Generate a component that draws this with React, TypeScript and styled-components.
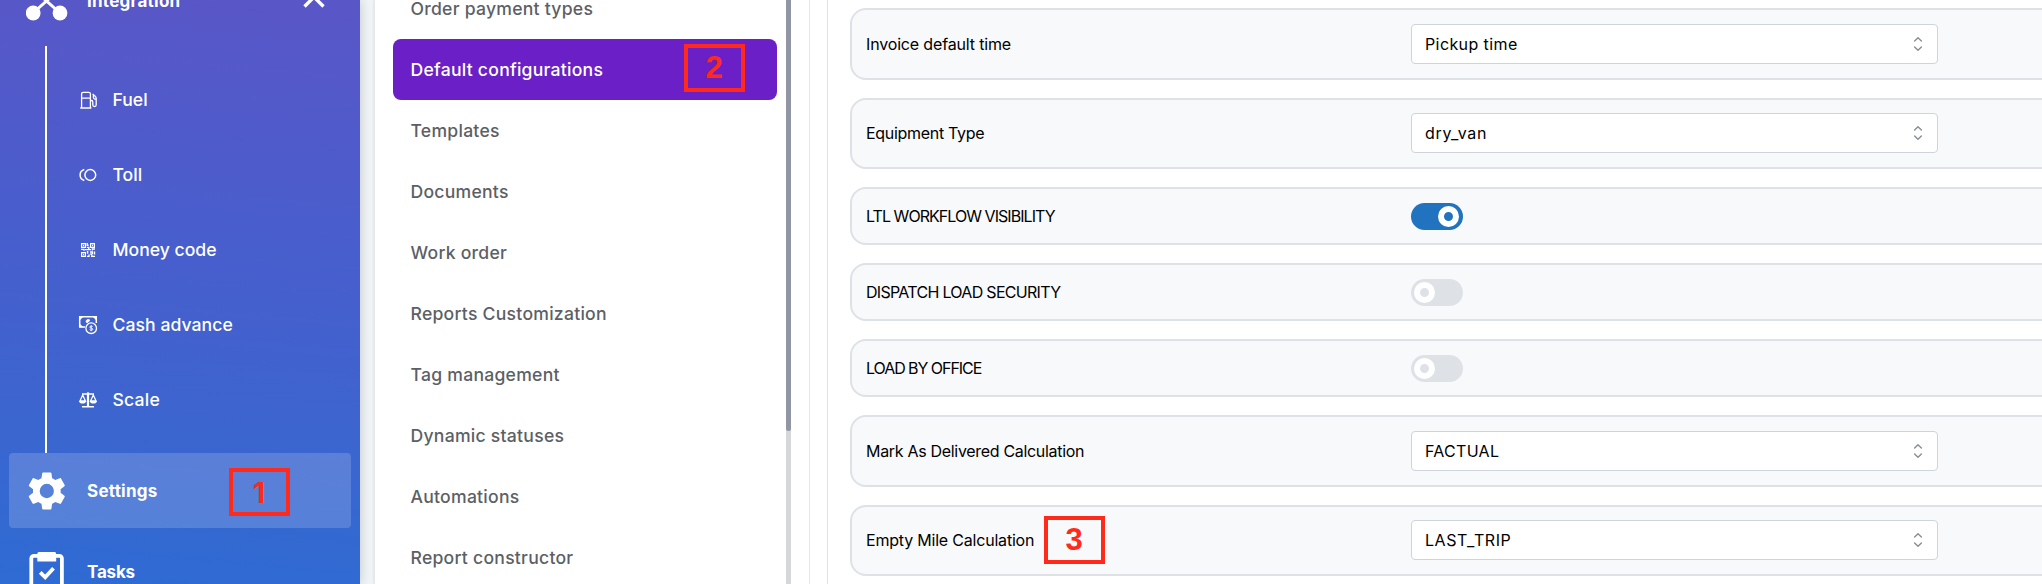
import React from 'react';
import styled, { createGlobalStyle } from 'styled-components';

const Global = createGlobalStyle`
  *{box-sizing:border-box}
  html,body{margin:0;height:584px;overflow:hidden;background:#fff}
  body{font-family:Inter,"Liberation Sans",sans-serif}
`;
const Page = styled.div`display:flex;height:584px;overflow:hidden;background:#f1f5f8;position:relative;`;
const Sidebar = styled.nav`
  width:360px;flex:none;height:584px;overflow:hidden;color:#fff;position:relative;z-index:1;
  background:linear-gradient(185deg,#5a56c7 0%,#485ecd 42%,#3c65cf 72%,#2e6bd3 100%);
  box-shadow:0 0 12px rgba(0,0,0,.2);
`;
const Parent = styled.div<{ $active?: boolean; $shift?: number }>`
  height:75px;margin:${p => p.$shift || 0}px 9px 0;padding-left:17px;display:flex;align-items:center;gap:19px;
  border-radius:4px;background:${p => (p.$active ? 'rgba(255,255,255,.17)' : 'transparent')};
  svg{flex:none}
`;
const ParentLabel = styled.span<{ $ls?: number }>`font-size:17px;font-weight:700;letter-spacing:${p => p.$ls || 0}px;flex:1;`;
const Children = styled.div`margin:8px 0 0 45px;height:407px;border-left:2px solid #fff;padding-top:16px;`;
const Child = styled.div`
  height:75px;display:flex;align-items:center;padding-left:31px;gap:14.5px;font-size:17.6px;font-weight:500;
  svg{flex:none}
`;
const ChildLabel = styled.span<{ $ls?: number }>`letter-spacing:${p => p.$ls || 0}px;`;

const Menu = styled.aside`
  width:436px;flex:none;margin-left:14px;background:#fff;border:solid #e5e7ea;border-width:0 1px;display:flex;
  box-shadow:0 0 3px rgba(0,0,0,.12);
`;
const MenuList = styled.div`width:384px;margin:-22px 9px 0 18px;`;
const MenuItem = styled.div<{ $active?: boolean }>`
  height:61px;display:flex;align-items:center;padding-left:17.5px;border-radius:8px;font-size:17.6px;font-weight:450;
  letter-spacing:.25px;
  color:${p => (p.$active ? '#fff' : '#5c5f66')};background:${p => (p.$active ? '#6a20c6' : 'transparent')};
`;
const ScrollTrack = styled.div`width:5px;background:#d5d7d9;`;
const ScrollThumb = styled.div`height:431px;background:#9295a4;border-radius:0 0 3px 3px;`;

const Content = styled.main`
  flex:1;min-width:0;background:#fff;padding-left:17px;display:flex;
`;
const Panel = styled.div`flex:1;border-left:1px solid #dee2e6;padding:8px 0 0 22px;display:flex;flex-direction:column;gap:18px;`;
const Card = styled.div<{ $tall?: boolean }>`
  height:${p => (p.$tall ? 71.5 : 58)}px;flex:none;margin-right:-20px;border:2px solid #dee2e6;border-radius:16px;background:#f8f9fb;
  display:flex;align-items:center;padding-left:14px;
`;
const CardLabel = styled.span<{ $ls: number }>`width:545px;font-size:16px;letter-spacing:${p => p.$ls}px;color:#000;white-space:nowrap;`;
const Select = styled.div<{ $ls: number }>`
  width:527px;height:40px;border:1px solid #ced4da;border-radius:4px;background:#fff;display:flex;align-items:center;
  justify-content:space-between;padding:0 13px;font-size:16px;letter-spacing:${p => p.$ls}px;color:#000;
`;
const Switch = styled.div<{ $on?: boolean }>`
  width:52px;height:27px;border-radius:14px;background:${p => (p.$on ? '#2172bf' : '#dee2e6')};display:flex;align-items:center;
  justify-content:${p => (p.$on ? 'flex-end' : 'flex-start')};padding:0 4px 0 3px;
`;
const Thumb = styled.div<{ $on?: boolean }>`
  width:21px;height:21px;border-radius:50%;background:${p => (p.$on ? '#2172bf' : '#dee2e6')};border:6px solid #fff;
`;
const Callout = styled.div<{ $x: number; $y: number; $face?: string }>`
  position:absolute;z-index:2;left:${p => p.$x}px;top:${p => p.$y}px;width:61px;height:48px;border:4px solid #ff2a1c;color:#ff2a1c;
  display:flex;align-items:center;justify-content:center;padding-right:1px;
  font:700 ${p => (p.$face ? 29 : 31)}px ${p => p.$face || '"Liberation Sans"'},sans-serif;
`;

const Hub = () => (
  <svg width="42" height="42" viewBox="0 0 42 42" fill="#fff" stroke="#fff">
    <path d="M7 33 L34 9 M34 33 L7 9" strokeWidth="3" />
    <g stroke="none">
      <circle cx="7.2" cy="33" r="7.4" /><circle cx="34" cy="33" r="7.4" /><circle cx="7.2" cy="9" r="7.4" /><circle cx="34" cy="9" r="7.4" />
    </g>
  </svg>
);
const Chevron = styled.svg`margin-right:26px;`;
const Fuel = () => (
  <svg width="20" height="20" viewBox="0 0 20 20" fill="none" stroke="#fff" strokeWidth="1.3">
    <path d="M3.6 18V4q0-1.6 1.6-1.6h5.6q1.6 0 1.6 1.6v14M2.2 18h11.2M3.6 8.2h8.8M12.4 10.5h1q1.4 0 1.4 1.5v3q0 1.5 1.7 1.5t1.7-1.5V8.5q0-1.3-1-2.2L14.6 4M15.4 5v2.5q.2 1.8 2.8 1.8" />
  </svg>
);
const Toll = () => (
  <svg width="20" height="20" viewBox="0 0 20 20" fill="none" stroke="#fff" strokeWidth="1.5">
    <circle cx="12.3" cy="10" r="5.4" /><path d="M6.3 4.5a5.7 5.7 0 0 0 0 11" />
  </svg>
);
const Qr = () => (
  <svg width="20" height="20" viewBox="0 0 20 20" fill="none" stroke="#fff" strokeWidth="1.2">
    <path d="M3.6 3.6h3.8v3.8H3.6zM12.6 3.6h3.8v3.8h-3.8zM3.6 12.6h3.8v3.8H3.6z" />
    <path d="M5 5.5h1M14 5.5h1M5 14.5h1M9.2 3v2.2h1.4M8.8 7.4h2v2M3 9.4h3v1.4M7 9.6h6M9.6 11v2.8M9 16.4h2v-2M12 12h2.4v2M17 9h-2.6v1.6M16.5 11.5v3M13 16.4h4M12.4 13.6l2 2" strokeWidth="1.4" />
  </svg>
);
const Cash = () => (
  <svg width="20" height="20" viewBox="0 0 20 20" fill="none" stroke="#fff" strokeWidth="1.5">
    <path d="M7 12H1.7V1.8h16.6V8" />
    <path d="M1.7 1.8h3.2L1.7 5zM18.3 1.8h-3.2l3.2 3.2zM1.7 12V9l3 3zM8 7a2.2 2.2 0 0 1 4-1.6L9 8z" fill="#fff" strokeWidth=".6" />
    <circle cx="13.2" cy="13.2" r="5.3" strokeWidth="1.3" />
    <path d="M14.7 11.8q-.3-.7-1.4-.7-1.5 0-1.5 1t1.5 1.1 1.5 1.1-1.5 1-1.5-.8M13.2 10.2v6" strokeWidth=".9" />
  </svg>
);
const Scale = () => (
  <svg width="20" height="20" viewBox="0 0 20 20" fill="none" stroke="#fff" strokeWidth="1.3">
    <path d="M4 4h12M4 16.8h12" strokeWidth="1.6" /><path d="M10 2.4v14.4" strokeWidth="2.2" />
    <path d="M4.7 5 1.9 11h5.6zM15.3 5l-2.8 6h5.6z" />
    <path d="M1 11h7.2q-.6 2.6-3.6 2.6T1 11zM11.8 11H19q-.6 2.6-3.6 2.6T11.8 11z" fill="#fff" stroke="none" />
  </svg>
);
const Gear = () => (
  <svg width="42" height="42" viewBox="1.2 1.1 21.8 21.8" fill="#fff">
    <path d="M19.14 12.94c.04-.3.06-.61.06-.94 0-.32-.02-.64-.07-.94l2.03-1.58c.18-.14.23-.41.12-.61l-1.92-3.32c-.12-.22-.37-.29-.59-.22l-2.39.96c-.5-.38-1.03-.7-1.62-.94l-.36-2.54c-.04-.24-.24-.41-.48-.41h-3.84c-.24 0-.43.17-.47.41l-.36 2.54c-.59.24-1.13.57-1.62.94l-2.39-.96c-.22-.08-.47 0-.59.22L2.74 8.87c-.12.21-.08.47.12.61l2.03 1.58c-.05.3-.09.63-.09.94s.02.64.07.94l-2.03 1.58c-.18.14-.23.41-.12.61l1.92 3.32c.12.22.37.29.59.22l2.39-.96c.5.38 1.03.7 1.62.94l.36 2.54c.05.24.24.41.48.41h3.84c.24 0 .44-.17.47-.41l.36-2.54c.59-.24 1.13-.56 1.62-.94l2.39.96c.22.08.47 0 .59-.22l1.92-3.32c.12-.22.07-.47-.12-.61zM12 15.7a3.7 3.7 0 1 1 0-7.4 3.7 3.7 0 0 1 0 7.4z" />
  </svg>
);
const Clipboard = () => (
  <svg width="42" height="42" viewBox="0 0 42 42" fill="none" stroke="#fff">
    <rect x="5.3" y="4.8" width="30.6" height="34" rx="2.5" strokeWidth="3.8" />
    <path d="M13 1h15.6q1.6 0 1.6 2v7.5H11.3V3q0-2 1.7-2z" fill="#fff" stroke="none" />
    <path d="M14.2 21.3l5 5 8.3-9" strokeWidth="3.8" />
  </svg>
);
const Selector = () => (
  <svg width="12" height="16" viewBox="0 0 12 16" fill="none" stroke="#868e96" strokeWidth="1.4" strokeLinecap="round" strokeLinejoin="round">
    <path d="M2.6 5 6 1.8 9.4 5M2.6 11 6 14.2 9.4 11" />
  </svg>
);

const children = [
  { label: 'Fuel', ls: 0, Icon: Fuel },
  { label: 'Toll', ls: 0, Icon: Toll },
  { label: 'Money code', ls: 0, Icon: Qr },
  { label: 'Cash advance', ls: 0.05, Icon: Cash },
  { label: 'Scale', ls: 0.2, Icon: Scale },
];
const menu = [
  'Order payment types', 'Default configurations', 'Templates', 'Documents', 'Work order',
  'Reports Customization', 'Tag management', 'Dynamic statuses', 'Automations', 'Report constructor',
];
const settings: { label: string; ls: number; value?: string; vls?: number; on?: boolean }[] = [
  { label: 'Invoice default time', ls: -0.16, value: 'Pickup time', vls: 0.4 },
  { label: 'Equipment Type', ls: -0.3, value: 'dry_van', vls: 0.7 },
  { label: 'LTL WORKFLOW VISIBILITY', ls: -0.95, on: true },
  { label: 'DISPATCH LOAD SECURITY', ls: -0.7 },
  { label: 'LOAD BY OFFICE', ls: -1.05 },
  { label: 'Mark As Delivered Calculation', ls: -0.31, value: 'FACTUAL', vls: 0.3 },
  { label: 'Empty Mile Calculation', ls: -0.2, value: 'LAST_TRIP', vls: 0.55 },
];

export default function App() {
  return (
    <Page>
      <Global />
      <Sidebar>
        <Parent $shift={-37}>
          <Hub />
          <ParentLabel $ls={0.25}>Integration</ParentLabel>
          <Chevron width="22" height="14" viewBox="0 0 22 14" fill="none" stroke="#fff" strokeWidth="3.4">
            <path d="M1.5 12.5 11 3 20.5 12.5" />
          </Chevron>
        </Parent>
        <Children>
          {children.map(({ label, ls, Icon }) => (
            <Child key={label}><Icon /><ChildLabel $ls={ls}>{label}</ChildLabel></Child>
          ))}
        </Children>
        <Parent $active><Gear /><ParentLabel $ls={0.25}>Settings</ParentLabel></Parent>
        <Parent $shift={6}><Clipboard /><ParentLabel $ls={-0.2}>Tasks</ParentLabel></Parent>
      </Sidebar>
      <Menu>
        <MenuList>
          {menu.map((label, i) => <MenuItem key={label} $active={i === 1}>{label}</MenuItem>)}
        </MenuList>
        <ScrollTrack><ScrollThumb /></ScrollTrack>
      </Menu>
      <Content>
        <Panel>
          {settings.map(s => (
            <Card key={s.label} $tall={!!s.value}>
              <CardLabel $ls={s.ls}>{s.label}</CardLabel>
              {s.value ? <Select $ls={s.vls || 0}>{s.value}<Selector /></Select> : <Switch $on={s.on}><Thumb $on={s.on} /></Switch>}
            </Card>
          ))}
        </Panel>
      </Content>
      <Callout $x={229} $y={468} $face="Inter">1</Callout>
      <Callout $x={684} $y={44}>2</Callout>
      <Callout $x={1044} $y={516}>3</Callout>
    </Page>
  );
}
